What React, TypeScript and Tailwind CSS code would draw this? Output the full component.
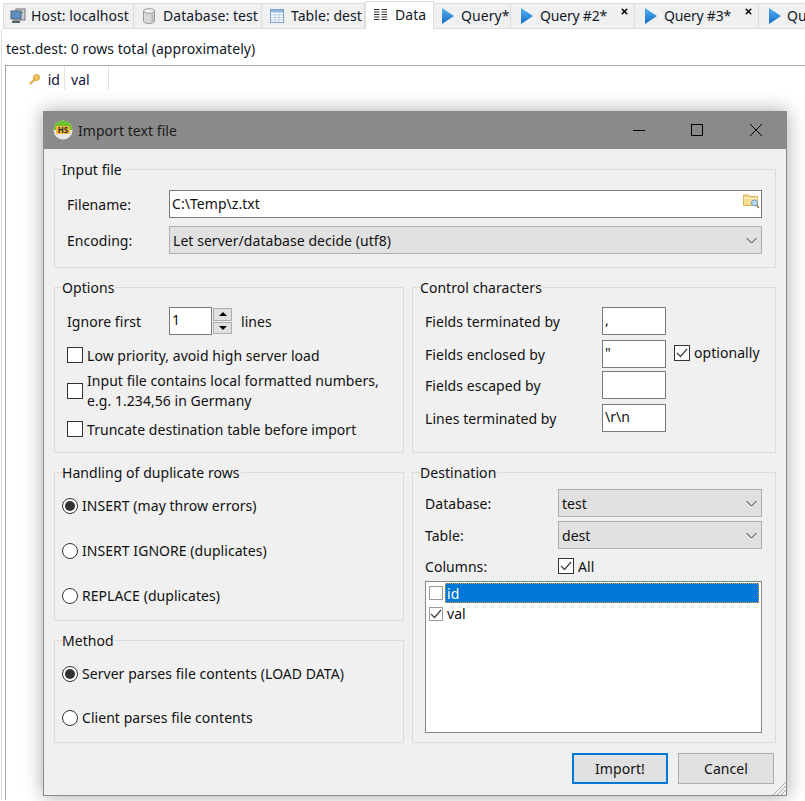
import type { ReactNode } from 'react';
import { X } from 'lucide-react';

const font = { fontFamily: '"Noto Sans", "Liberation Sans", sans-serif' };

function HostIcon() {
  return (
    <svg width="16" height="16" viewBox="0 0 16 16" className="shrink-0">
      <rect x="6" y="1" width="9" height="11" fill="#c9ced4" stroke="#6f7780" />
      <rect x="11" y="4" width="2" height="1.5" fill="#4caf50" />
      <rect x="1" y="3" width="10" height="8" fill="#5b8fc4" stroke="#59636e" />
      <rect x="3" y="11" width="6" height="2" fill="#8c949c" />
      <rect x="2" y="13" width="8" height="2" fill="#59636e" />
    </svg>
  );
}

function DbIcon() {
  return (
    <svg width="14" height="16" viewBox="0 0 14 16" className="shrink-0">
      <path d="M1.5 3v10c0 1.4 2.5 2.5 5.5 2.5s5.5-1.1 5.5-2.5V3z" fill="#d9d9d9" stroke="#9b9b9b" />
      <ellipse cx="7" cy="3" rx="5.5" ry="2.3" fill="#f2f2f2" stroke="#9b9b9b" />
      <rect x="9.5" y="5.5" width="2" height="8" fill="#b5b5b5" />
    </svg>
  );
}

function TableIcon() {
  return (
    <svg width="14" height="14" viewBox="0 0 14 14" className="shrink-0">
      <rect x="0.5" y="0.5" width="13" height="13" fill="#fff" stroke="#7da2ce" />
      <rect x="1" y="1" width="12" height="2.5" fill="#8fb4de" />
      <path d="M1 6h12M1 8.5h12M1 11h12M5 3.5V13M9 3.5V13" stroke="#b9cde5" fill="none" />
    </svg>
  );
}

function DataIcon() {
  return (
    <svg width="13" height="12" viewBox="0 0 13 12" className="shrink-0">
      <path d="M0 .5h5.5M7.5.5H13M0 3h5.5M7.5 3H13M0 5.5h5.5M7.5 5.5H13M0 8h5.5M7.5 8H13M0 10.5h5.5M7.5 10.5H13" stroke="#333" fill="none" />
    </svg>
  );
}

function PlayIcon() {
  return (
    <svg width="12" height="16" viewBox="0 0 12 16" className="shrink-0">
      <defs>
        <linearGradient id="play" x1="0" y1="0" x2="0" y2="1">
          <stop offset="0" stopColor="#58b4f0" />
          <stop offset="1" stopColor="#1269c7" />
        </linearGradient>
      </defs>
      <path d="M0 0l12 8-12 8z" fill="url(#play)" />
    </svg>
  );
}

function KeyIcon() {
  return (
    <svg width="11" height="11" viewBox="0 0 11 11">
      <circle cx="7.5" cy="3.5" r="3" fill="#f3c565" stroke="#d99a32" />
      <path d="M5.5 5.5L1 10" stroke="#e3a73f" strokeWidth="2" fill="none" />
    </svg>
  );
}

function FolderIcon() {
  return (
    <svg width="17" height="15" viewBox="0 0 17 15">
      <path d="M.5 2.5V1h5l1 1.5h8v9H.5z" fill="#f7dc93" stroke="#d8b055" />
      <path d="M.5 4.5h14" stroke="#fff2c9" fill="none" />
      <circle cx="11.5" cy="9" r="3" fill="#bcdcf2" stroke="#6f9cc0" />
      <path d="M13.5 11l2.5 3" stroke="#a07a50" strokeWidth="1.6" fill="none" />
    </svg>
  );
}

function Logo() {
  return (
    <svg width="20" height="20" viewBox="0 0 20 20" className="shrink-0">
      <circle cx="10" cy="10" r="9.5" fill="#e8e8e8" />
      <path d="M.5 10a9.5 9.5 0 0 1 19 0z" fill="#6cc22e" />
      <rect x="3" y="6" width="14" height="8" rx="1" fill="#f0b93c" />
      <text x="10" y="13" textAnchor="middle" fontSize="8" fontWeight="700" fill="#2c2c2c" style={font}>HS</text>
    </svg>
  );
}

function Chevron() {
  return (
    <svg width="11" height="7" viewBox="0 0 11 7">
      <path d="M.5 1l5 5 5-5" stroke="#333" fill="none" />
    </svg>
  );
}

function Tab({ icon, label, className, close }: { icon: ReactNode; label: string; className: string; close?: boolean }) {
  return (
    <div className={`relative flex h-[26px] shrink-0 items-center overflow-hidden border-t border-r border-b border-[#dcdcdc] bg-[#f0f0f0] pb-px text-[#101828] ${className}`}>
      {icon}
      <span className="whitespace-nowrap">{label}</span>
      {close && <X size={9} strokeWidth={4} className="absolute top-[3px] right-[5px] text-black" />}
    </div>
  );
}

function Group({ title, className, children }: { title: string; className: string; children: ReactNode }) {
  return (
    <div className={`relative border border-[#dcdcdc] ${className}`}>
      <span className="absolute -top-[10px] left-[7px] bg-[#f0f0f0] pr-px leading-[20px]">{title}</span>
      {children}
    </div>
  );
}

function Check({ checked, small }: { checked?: boolean; small?: boolean }) {
  return (
    <span className={`flex shrink-0 items-center justify-center border ${small ? 'h-[14px] w-[14px] border-[#9a9a9a] bg-white' : 'h-4 w-4 border-[#333] bg-white'}`}>
      {checked && (
        <svg width="12" height="10" viewBox="0 0 12 10">
          <path d="M1 5l3.5 3.5L11 1" stroke="#444" strokeWidth="1.3" fill="none" />
        </svg>
      )}
    </span>
  );
}

function Radio({ label, checked, className }: { label: string; checked?: boolean; className?: string }) {
  return (
    <div className={`flex h-4 items-center gap-1 ${className ?? ''}`}>
      <span className="flex h-4 w-4 items-center justify-center rounded-full border border-[#333] bg-white">
        {checked && <span className="h-[10px] w-[10px] rounded-full bg-[#333]" />}
      </span>
      <span className="pb-[2px]">{label}</span>
    </div>
  );
}

function Select({ value, className }: { value: string; className: string }) {
  return (
    <div className={`flex h-[28px] items-center justify-between border border-[#adadad] bg-[#e1e1e1] pr-[4px] pl-[3px] ${className}`}>
      {value}
      <Chevron />
    </div>
  );
}

function TextBox({ value }: { value: string }) {
  return <div className="h-[28px] w-[64px] border border-[#7a7a7a] bg-white pl-[2px] leading-[24px]">{value}</div>;
}

function ControlRow({ label, value, className, children }: { label: string; value: string; className?: string; children?: ReactNode }) {
  return (
    <div className={`flex items-center ${className ?? ''}`}>
      <span className="w-[177px]">{label}</span>
      <TextBox value={value} />
      {children}
    </div>
  );
}

export default function App() {
  return (
    <div className="relative h-[801px] w-[805px] overflow-hidden bg-white text-[14px] tracking-[0.05px] text-[#111]" style={font}>
      <div className="flex h-[29px] items-end pl-[3px]">
        <Tab icon={<HostIcon />} label="Host: localhost" className="w-[131px] gap-[5px] border-l pl-[6px]" />
        <Tab icon={<DbIcon />} label="Database: test" className="w-[128px] gap-[7px] pl-2" />
        <Tab icon={<TableIcon />} label="Table: dest" className="w-[103px] gap-[7px] pl-2" />
        <div className="flex h-[28px] w-[69px] shrink-0 items-center gap-[8px] border-x border-t border-[#dcdcdc] bg-white pb-[2px] pl-2 text-[#101828]">
          <DataIcon />
          Data
        </div>
        <Tab icon={<PlayIcon />} label="Query*" className="w-[77px] gap-[7px] pl-2" />
        <Tab icon={<PlayIcon />} label="Query #2*" className="w-[124px] gap-[7px] pl-[10px] tracking-[-0.2px]" close />
        <Tab icon={<PlayIcon />} label="Query #3*" className="w-[124px] gap-[7px] pl-[10px] tracking-[-0.2px]" close />
        <Tab icon={<PlayIcon />} label="Qu" className="w-[46px] gap-[6px] border-r-0 pl-[10px]" />
      </div>
      <div className="ml-px border-l border-[#dcdcdc] pt-[10px] pl-[4px] leading-[20px] text-[#101828]">
        test.dest: 0 rows total (approximately)
      </div>
      <div className="ml-px border-l border-[#dcdcdc] pt-[6px] pl-[3px]">
        <div className="h-[735px] border-t border-l border-[#a6a6a6]">
          <div className="flex h-[24px] items-center text-[#14143c]">
            <div className="flex h-full w-[59px] items-center justify-end gap-[8px] border-r border-[#e3e3e3] pt-[2px] pr-[4px]">
              <KeyIcon />
              id
            </div>
            <div className="flex h-full w-[44px] items-center border-r border-[#e3e3e3] pt-[2px] pl-[6px]">val</div>
          </div>
        </div>
      </div>

      <div className="absolute top-[111px] left-[43px] flex h-[685px] w-[744px] flex-col border border-t-0 border-[#8a8a8a] bg-[#f0f0f0] shadow-[0_0_18px_rgba(0,0,0,0.35)]">
        <div className="flex h-[38px] shrink-0 items-center bg-[#8a8a8a] pl-[9px] text-[#1a1a1a]">
          <Logo />
          <span className="ml-[5px]">Import text file</span>
          <div className="ml-auto flex items-center">
            <svg width="12" height="12" viewBox="0 0 12 12" className="mr-[46px]">
              <path d="M0 6.5h12" stroke="#000" fill="none" />
            </svg>
            <svg width="12" height="12" viewBox="0 0 12 12" className="mr-[47px]">
              <rect x=".5" y=".5" width="11" height="11" stroke="#000" fill="none" />
            </svg>
            <svg width="12" height="12" viewBox="0 0 12 12" className="mr-[24px]">
              <path d="M0 0l12 12M12 0L0 12" stroke="#000" fill="none" />
            </svg>
          </div>
        </div>

        <div className="flex flex-1 flex-col pt-[20px] pl-[10px]">
          <Group title="Input file" className="h-[99px] w-[722px] pt-[20px] pl-[12px]">
            <div className="flex items-center">
              <span className="w-[102px]">Filename:</span>
              <div className="flex h-[28px] w-[593px] items-center justify-between border border-[#7a7a7a] bg-white pr-px pb-[2px] pl-[2px]">
                C:\Temp\z.txt
                <span className="mb-[3px]">
                  <FolderIcon />
                </span>
              </div>
            </div>
            <div className="mt-[8px] flex items-center">
              <span className="w-[102px]">Encoding:</span>
              <Select value="Let server/database decide (utf8)" className="w-[593px]" />
            </div>
          </Group>

          <div className="mt-[19px] flex gap-[8px]">
            <div className="flex w-[350px] flex-col gap-[19px]">
              <Group title="Options" className="h-[166px] pt-[19px] pl-[12px]">
                <div className="flex items-center">
                  <span className="w-[102px]">Ignore first</span>
                  <div className="h-[28px] w-[43px] border border-[#7a7a7a] bg-white pl-[2px] leading-[24px]">1</div>
                  <div className="ml-px flex h-[26px] w-[19px] flex-col gap-px">
                    <div className="flex flex-1 items-center justify-center border border-[#adadad] bg-[#e1e1e1]">
                      <span className="h-0 w-0 border-x-[4px] border-b-[4px] border-x-transparent border-b-black" />
                    </div>
                    <div className="flex flex-1 items-center justify-center border border-[#adadad] bg-[#e1e1e1]">
                      <span className="h-0 w-0 border-x-[4px] border-t-[4px] border-x-transparent border-t-black" />
                    </div>
                  </div>
                  <span className="ml-[9px]">lines</span>
                </div>
                <div className="mt-[12px] flex h-4 items-center gap-1">
                  <Check />
                  Low priority, avoid high server load
                </div>
                <div className="mt-[8px] flex items-center gap-1 leading-[20px]">
                  <Check />
                  <span>
                    Input file contains local formatted numbers,
                    <br />
                    e.g. 1.234,56 in Germany
                  </span>
                </div>
                <div className="mt-[10px] flex h-4 items-center gap-1">
                  <Check />
                  Truncate destination table before import
                </div>
              </Group>

              <Group title="Handling of duplicate rows" className="h-[149px] pt-[25px] pl-[7px]">
                <Radio label="INSERT (may throw errors)" checked />
                <Radio label="INSERT IGNORE (duplicates)" className="mt-[29px]" />
                <Radio label="REPLACE (duplicates)" className="mt-[29px]" />
              </Group>

              <Group title="Method" className="h-[103px] pt-[25px] pl-[7px]">
                <Radio label="Server parses file contents (LOAD DATA)" checked />
                <Radio label="Client parses file contents" className="mt-[28px]" />
              </Group>
            </div>

            <div className="flex w-[364px] flex-col gap-[19px]">
              <Group title="Control characters" className="h-[166px] pt-[19px] pl-[12px]">
                <ControlRow label="Fields terminated by" value="," />
                <ControlRow label="Fields enclosed by" value={'"'} className="mt-[5px]">
                  <span className="ml-[8px] flex items-center gap-1 pb-[3px]">
                    <Check checked />
                    optionally
                  </span>
                </ControlRow>
                <ControlRow label="Fields escaped by" value="" className="mt-[3px]" />
                <ControlRow label="Lines terminated by" value="\r\n" className="mt-[5px]" />
              </Group>

              <Group title="Destination" className="h-[271px] pt-[16px] pl-[12px]">
                <div className="flex items-center">
                  <span className="w-[133px]">Database:</span>
                  <Select value="test" className="w-[204px]" />
                </div>
                <div className="mt-[4px] flex items-center">
                  <span className="w-[133px]">Table:</span>
                  <Select value="dest" className="w-[204px]" />
                </div>
                <div className="mt-[9px] flex h-4 items-center">
                  <span className="w-[133px]">Columns:</span>
                  <Check checked />
                  <span className="ml-1">All</span>
                </div>
                <div className="mt-[7px] h-[152px] w-[337px] border border-[#828790] bg-white pt-px pl-[3px]">
                  <div className="flex h-[20px] items-center gap-[2px]">
                    <Check small />
                    <span className="flex h-[20px] w-[314px] items-center border border-dotted border-[#f0a040] bg-[#0078d7] pl-px text-white">id</span>
                  </div>
                  <div className="flex h-[20px] items-center gap-[4px] pt-px">
                    <Check checked small />
                    val
                  </div>
                </div>
              </Group>
            </div>
          </div>

          <div className="mt-[10px] flex justify-end gap-[10px] pr-[12px]">
            <div className="flex h-[31px] w-[96px] items-center justify-center border-2 border-[#0078d7] bg-[#e1e1e1]">Import!</div>
            <div className="flex h-[31px] w-[96px] items-center justify-center border border-[#adadad] bg-[#e1e1e1]">Cancel</div>
          </div>
        </div>

        <svg width="14" height="14" viewBox="0 0 14 14" className="absolute right-0 bottom-0">
          <path d="M14 1L1 14M14 5L5 14M14 9L9 14" stroke="#a8a8a8" fill="none" />
        </svg>
      </div>
    </div>
  );
}
